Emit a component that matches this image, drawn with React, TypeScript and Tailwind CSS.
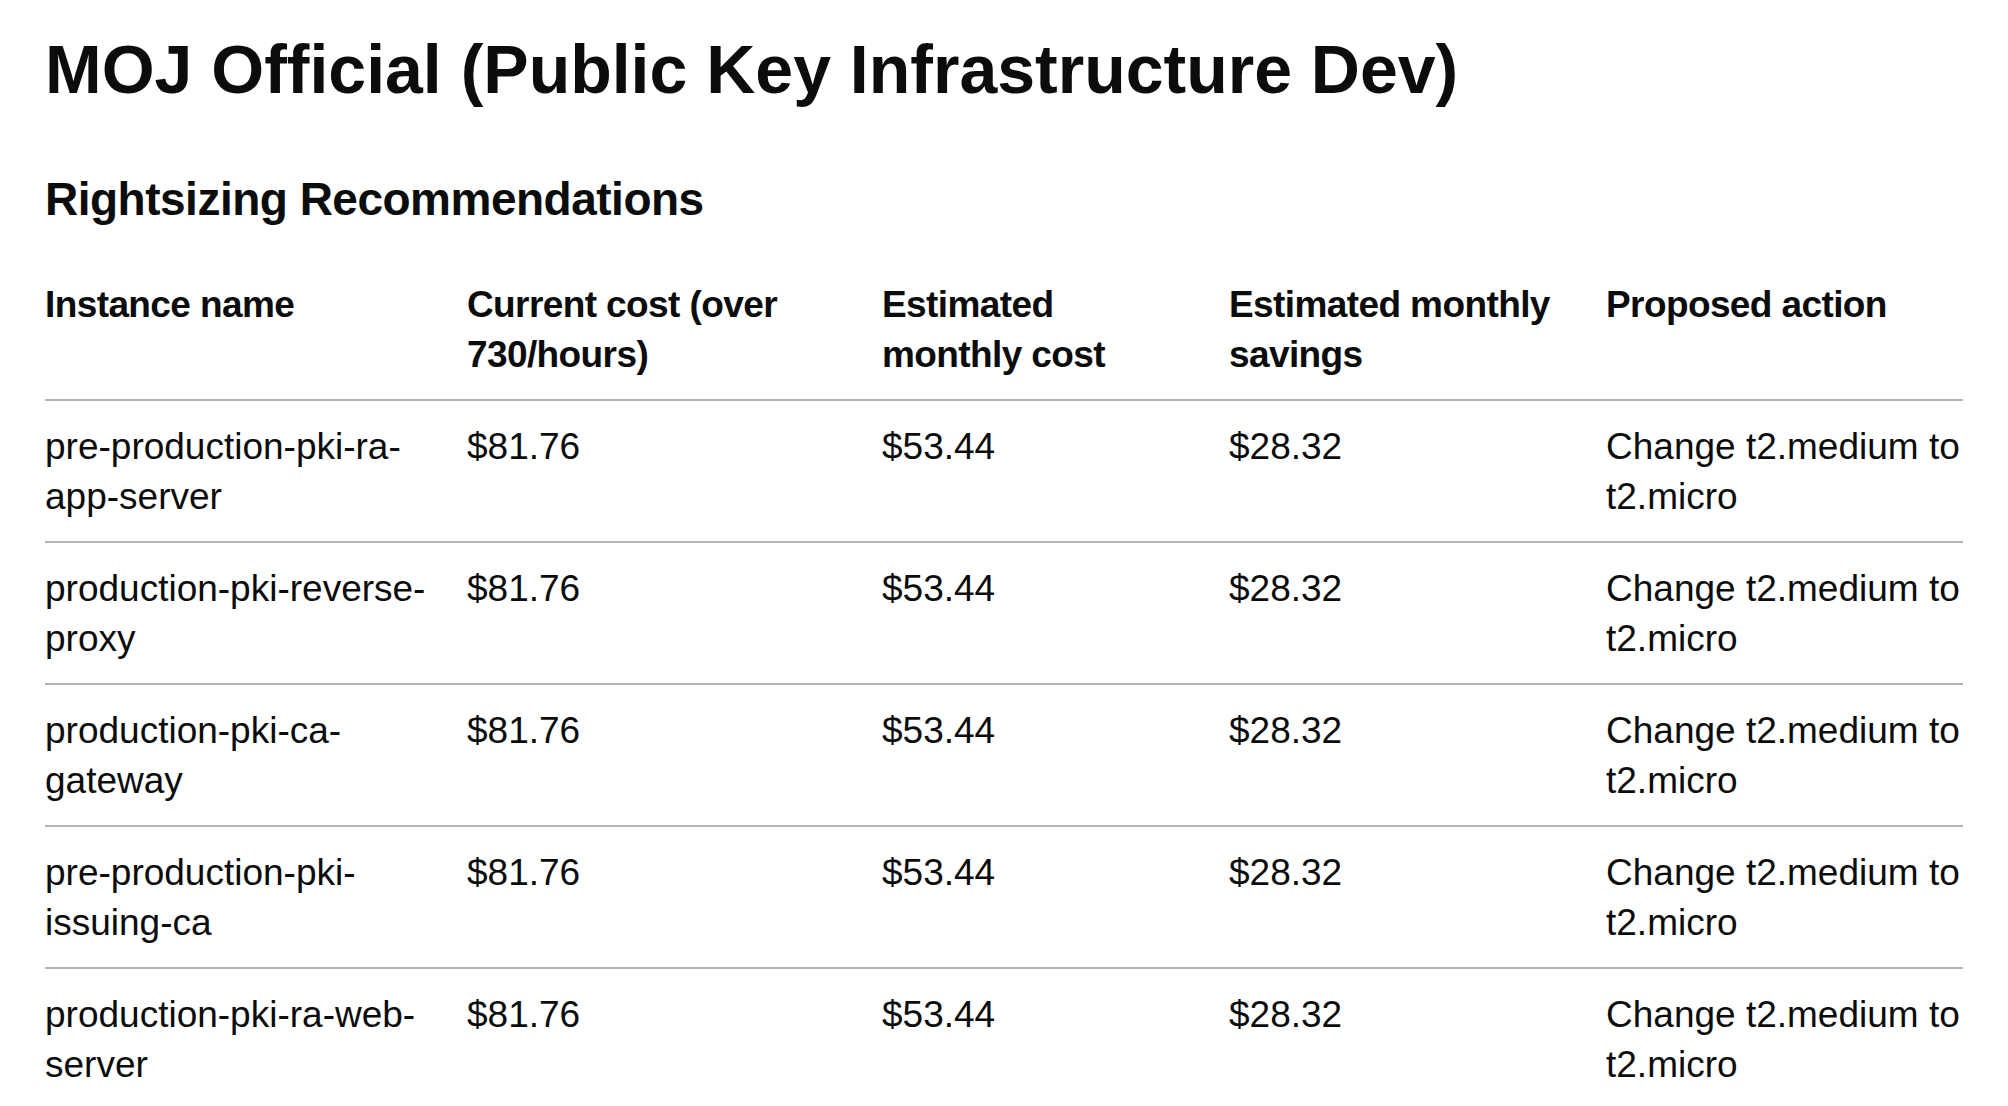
const headers = [
    ['Instance name'],
    ['Current cost (over', '730/hours)'],
    ['Estimated', 'monthly cost'],
    ['Estimated monthly', 'savings'],
    ['Proposed action'],
]

const rows = [
    ['pre-production-pki-ra-', 'app-server'],
    ['production-pki-reverse-', 'proxy'],
    ['production-pki-ca-', 'gateway'],
    ['pre-production-pki-', 'issuing-ca'],
    ['production-pki-ra-web-', 'server'],
]

const colWidths = ['w-[422px]', 'w-[415px]', 'w-[347px]', 'w-[377px]', 'w-[357px]']

function Lines({ lines }: { lines: string[] }) {
    return (
        <>
            {lines.map((l, i) => (
                <span key={i} className="block">{l}</span>
            ))}
        </>
    )
}

export default function App() {
    return (
        <div
            className="min-h-screen bg-white text-[#0b0c0c] px-[45px] pt-[29px]"
            style={{ fontFamily: '"Liberation Sans", Arial, sans-serif' }}
        >
            <h1 className="text-[68px] leading-[80px] font-bold mb-[60px]">
                MOJ Official (Public Key Infrastructure Dev)
            </h1>
            <table className="table-fixed border-collapse w-[1918px]">
                <caption className="text-left text-[46px] leading-[60px] font-bold mb-[30px] tracking-[-0.5px]">
                    Rightsizing Recommendations
                </caption>
                <colgroup>
                    {colWidths.map((w, i) => (
                        <col key={i} className={w} />
                    ))}
                </colgroup>
                <thead>
                    <tr className="border-b-2 border-[#b1b4b6]">
                        {headers.map((h, i) => (
                            <th
                                key={i}
                                className={`text-left align-top font-bold text-[37px] leading-[50px] pt-[21px] pb-[19px] whitespace-nowrap tracking-[-0.6px] ${i === 4 ? 'pr-0' : 'pr-[40px]'}`}
                            >
                                <Lines lines={h} />
                            </th>
                        ))}
                    </tr>
                </thead>
                <tbody>
                    {rows.map((name, r) => (
                        <tr key={r} className="border-b-2 border-[#b1b4b6]">
                            <td className="align-top text-[37px] leading-[50px] pt-[21px] pb-[19px] pr-[40px] whitespace-nowrap">
                                <Lines lines={name} />
                            </td>
                            <td className="align-top text-[37px] leading-[50px] pt-[21px] pb-[19px] pr-[40px] whitespace-nowrap">$81.76</td>
                            <td className="align-top text-[37px] leading-[50px] pt-[21px] pb-[19px] pr-[40px] whitespace-nowrap">$53.44</td>
                            <td className="align-top text-[37px] leading-[50px] pt-[21px] pb-[19px] pr-[40px] whitespace-nowrap">$28.32</td>
                            <td className="align-top text-[37px] leading-[50px] pt-[21px] pb-[19px] pr-0 whitespace-nowrap">
                                <Lines lines={['Change t2.medium to', 't2.micro']} />
                            </td>
                        </tr>
                    ))}
                </tbody>
            </table>
        </div>
    )
}
